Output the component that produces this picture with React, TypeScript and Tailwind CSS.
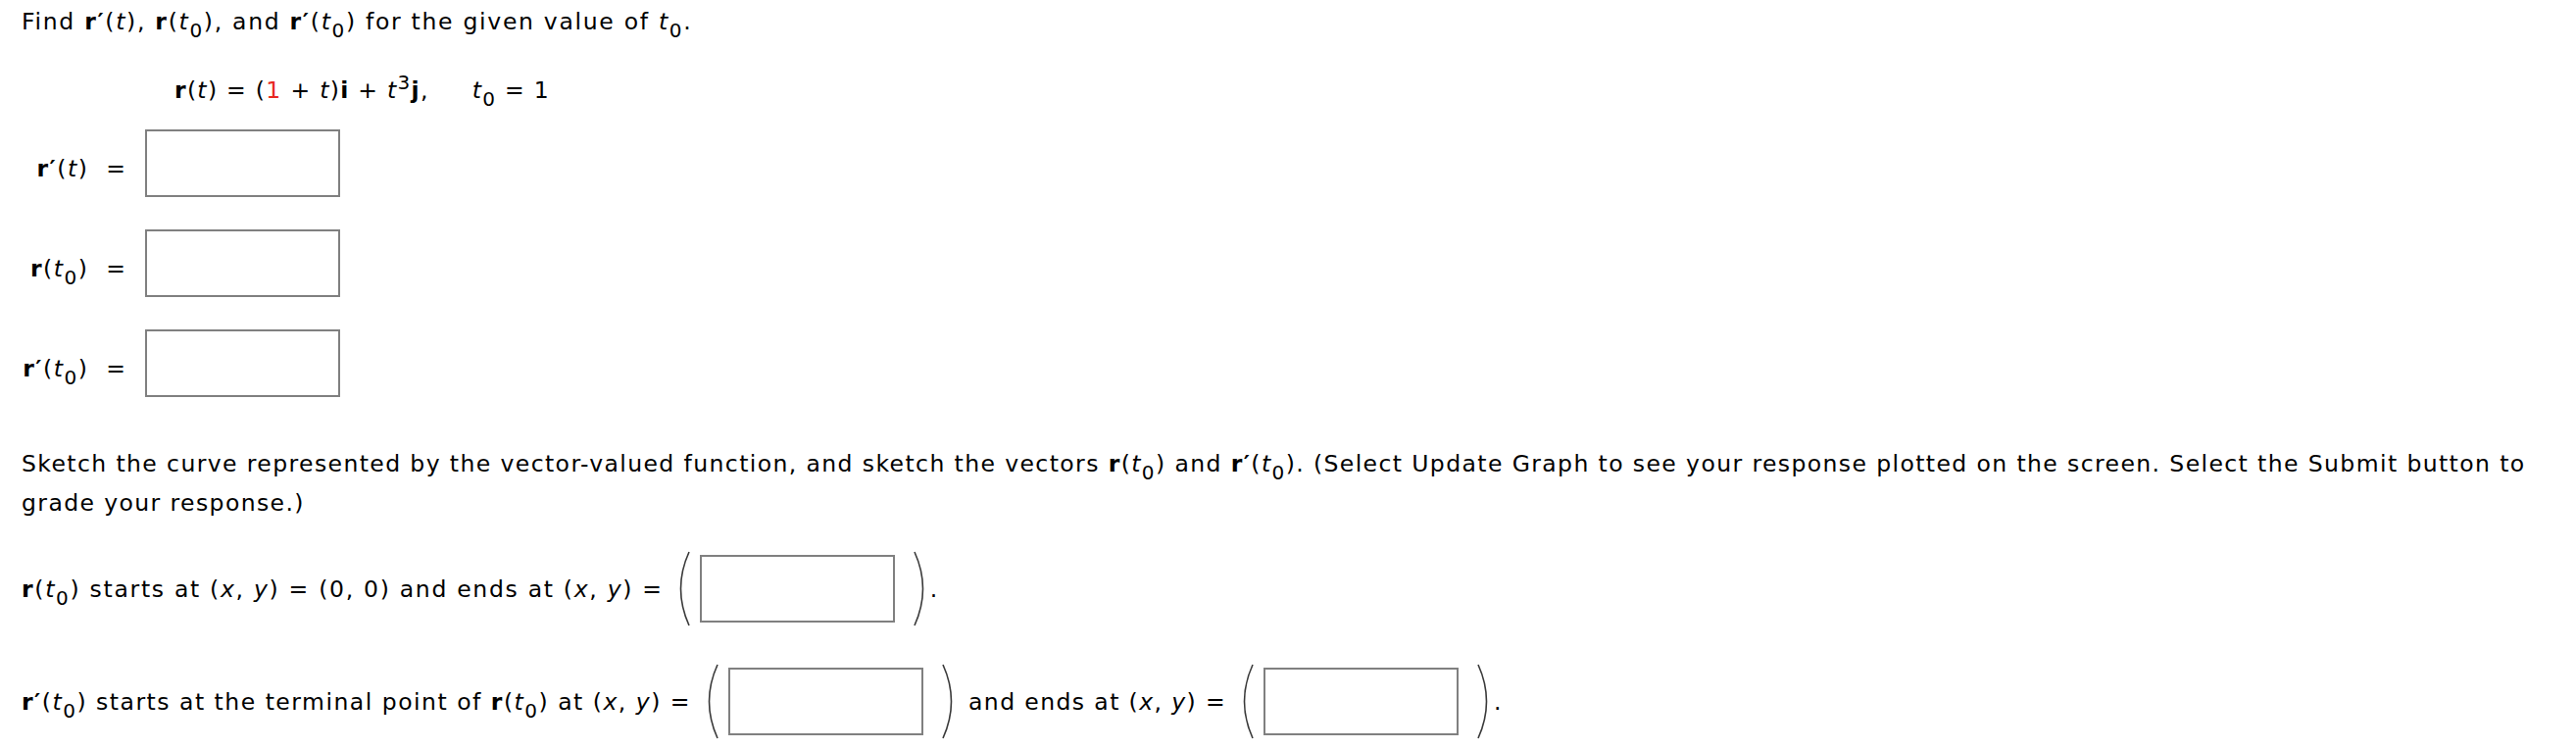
import React from "react";

// bold vector letter
function V({ children }: { children: React.ReactNode }) {
  return <span className="font-bold">{children}</span>;
}

// italic variable
function I({ children }: { children: React.ReactNode }) {
  return <span className="italic">{children}</span>;
}

// t with subscript zero
function T0() {
  return (
    <span className="whitespace-nowrap">
      <I>t</I>
      <span className="relative top-[8px] text-[20px] leading-none">0</span>
    </span>
  );
}

function AnswerBox({ className = "" }: { className?: string }) {
  return (
    <div
      className={`h-[69px] w-[199px] shrink-0 border-2 border-[#808080] bg-white ${className}`}
    />
  );
}

function Paren({ side }: { side: "left" | "right" }) {
  const d = side === "left" ? "M16 1 Q -1 38.5 16 76" : "M1 1 Q 18 38.5 1 76";
  return (
    <svg width="17" height="77" viewBox="0 0 17 77" className="shrink-0">
      <path d={d} fill="none" stroke="#3a3a3a" strokeWidth="1.6" />
    </svg>
  );
}

function PointInput() {
  return (
    <div className="flex items-center">
      <Paren side="left" />
      <AnswerBox className="ml-[10px]" />
      <div className="ml-[19px]">
        <Paren side="right" />
      </div>
    </div>
  );
}

function Row({ label, top }: { label: React.ReactNode; top: string }) {
  return (
    <div className={`flex items-center ${top}`}>
      <div className="mt-[10px] flex w-[106px] items-center justify-end whitespace-nowrap">
        <span className="tracking-[1.5px]">{label}</span>
        <span className="ml-[18px]">=</span>
      </div>
      <AnswerBox className="ml-[20px]" />
    </div>
  );
}

export default function App() {
  return (
    <div className="min-h-[764px] bg-white pl-[22px] pt-[2px] font-['DejaVu_Sans','Verdana',sans-serif] text-[23.5px] leading-[40px] text-black">
      <p className="tracking-[1.7px]">
        Find <V>r′</V>(<I>t</I>), <V>r</V>(<T0 />), and <V>r′</V>(<T0 />) for the given value of <T0 />.
      </p>

      <p className="mt-[30px] pl-[156px] tracking-[1.3px]">
        <V>r</V>(<I>t</I>) = (<span className="text-[#e8281f]">1</span> + <I>t</I>)<V>i</V> + <I>t</I>
        <span className="relative -top-[9px] text-[20px] leading-none">3</span>
        <V>j</V>,<span className="ml-[44px]" />
        <T0 /> = 1
      </p>

      <Row top="mt-[20px]" label={<><V>r′</V>(<I>t</I>)</>} />
      <Row top="mt-[33px]" label={<><V>r</V>(<T0 />)</>} />
      <Row top="mt-[33px]" label={<><V>r′</V>(<T0 />)</>} />

      <p className="mt-[48px] whitespace-nowrap tracking-[1.4px]">
        Sketch the curve represented by the vector-valued function, and sketch the vectors <V>r</V>(<T0 />) and{" "}
        <V>r′</V>(<T0 />). (Select Update Graph to see your response plotted on the screen. Select the Submit button to
        <br />
        grade your response.)
      </p>

      <div className="mt-[29px] flex items-center whitespace-nowrap">
        <span className="tracking-[1.7px]">
          <V>r</V>(<T0 />) starts at (<I>x</I>, <I>y</I>) = (0, 0) and ends at (<I>x</I>, <I>y</I>) =
        </span>
        <div className="ml-[10px]">
          <PointInput />
        </div>
        <span>.</span>
      </div>

      <div className="mt-[38px] flex items-center whitespace-nowrap">
        <span className="tracking-[1.5px]">
          <V>r′</V>(<T0 />) starts at the terminal point of <V>r</V>(<T0 />) at (<I>x</I>, <I>y</I>) =
        </span>
        <div className="ml-[11px]">
          <PointInput />
        </div>
        <span className="ml-[10px] tracking-[1.4px]">
          and ends at (<I>x</I>, <I>y</I>) =
        </span>
        <div className="ml-[11px]">
          <PointInput />
        </div>
        <span>.</span>
      </div>
    </div>
  );
}
